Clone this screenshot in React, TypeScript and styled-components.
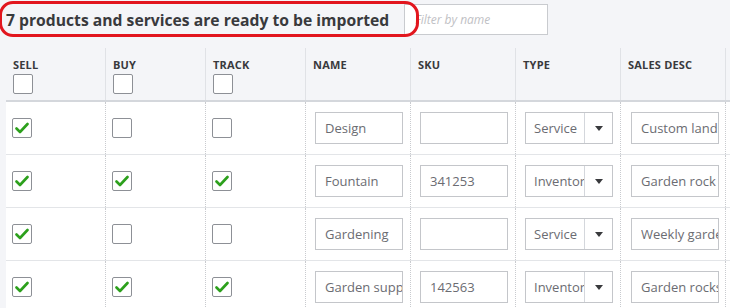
import React from "react";
import styled, { createGlobalStyle } from "styled-components";

const Global = createGlobalStyle`
  html, body { margin: 0; padding: 0; background: #f4f5f8; }
  body { font-family: "Open Sans", "Liberation Sans", sans-serif; color: #393a3d; }
  * { box-sizing: border-box; }
`;

const Page = styled.div`
  width: 730px;
  height: 308px;
  overflow: hidden;
  background: #f4f5f8;
  padding-left: 6px;
`;

const TopBar = styled.div`
  position: relative;
  height: 48px;
  display: flex;
  align-items: flex-start;
  padding-top: 4px;
`;

const Title = styled.h1`
  margin: 0;
  width: 398px;
  height: 31px;
  display: flex;
  align-items: center;
  font-size: 15.7px;
  font-weight: 700;
  color: #393a3d;
  white-space: nowrap;
`;

const Highlight = styled.div`
  position: absolute;
  left: -7px;
  top: 1px;
  width: 420px;
  height: 36px;
  border: 3px solid #e2161e;
  border-radius: 14px;
  pointer-events: none;
`;

const Filter = styled.input`
  width: 144px;
  height: 31px;
  border: 1px solid #c9cbcf;
  background: #fff;
  padding: 0 10px;
  font-family: "Open Sans", "Liberation Sans", sans-serif;
  font-size: 12px;
  outline: none;
  &::placeholder { color: #bfc1c5; font-style: italic; }
`;

const cols = "100px 100px 100px 105px 105px 105px 105px";

const HeadRow = styled.div`
  display: grid;
  grid-template-columns: ${cols};
  height: 54px;
  border-bottom: 2px solid #d4d7dc;
`;

const HeadCell = styled.div`
  padding: 10px 0 0 7px;
  border-right: 1px solid #e0e2e6;
  display: flex;
  flex-direction: column;
  gap: 2px;
  font-size: 11px;
  font-weight: 700;
  line-height: 14px;
  letter-spacing: 0.2px;
  color: #393a3d;
  text-transform: uppercase;
`;

const Row = styled.div`
  display: grid;
  grid-template-columns: ${cols};
  height: 53px;
  background: #fff;
  border-bottom: 1px solid #e3e5e8;
`;

const Cell = styled.div<{ $pad?: number }>`
  display: flex;
  align-items: center;
  padding-left: ${(p) => p.$pad ?? 6}px;
  border-right: 1px dotted #c9cbcf;
`;

const Box = styled.span`
  width: 20px;
  height: 20px;
  border: 1px solid #8d9096;
  border-radius: 2px;
  background: #fff;
  display: inline-flex;
  align-items: center;
  justify-content: center;
`;

const Field = styled.input`
  width: 88px;
  height: 32px;
  border: 1px solid #c4c6ca;
  border-radius: 0;
  background: #fff;
  padding: 0 0 0 9px;
  font-family: "Open Sans", "Liberation Sans", sans-serif;
  font-size: 13px;
  color: #6b6c72;
  outline: none;
`;

const Select = styled.div`
  width: 88px;
  height: 32px;
  border: 1px solid #c4c6ca;
  background: #fff;
  display: flex;
`;

const SelectText = styled.input`
  width: 59px;
  height: 100%;
  border: none;
  border-right: 1px solid #d4d7dc;
  padding: 0 0 0 8px;
  font-family: "Open Sans", "Liberation Sans", sans-serif;
  font-size: 13px;
  color: #6b6c72;
  outline: none;
  background: transparent;
`;

const SelectArrow = styled.div`
  flex: 1;
  display: flex;
  align-items: center;
  justify-content: center;
`;

const Check = ({ on }: { on?: boolean }) => (
  <Box>
    {on && (
      <svg width="14" height="12" viewBox="0 0 14 12">
        <path d="M1.5 6.5 L5 10 L12.5 2" fill="none" stroke="#2ca01c" strokeWidth="2.6" strokeLinecap="round" strokeLinejoin="round" />
      </svg>
    )}
  </Box>
);

const rows = [
  { sell: true, buy: false, track: false, name: "Design", sku: "", type: "Service", desc: "Custom landscape" },
  { sell: true, buy: true, track: true, name: "Fountain", sku: "341253", type: "Inventory", desc: "Garden rock fountain" },
  { sell: true, buy: false, track: false, name: "Gardening", sku: "", type: "Service", desc: "Weekly gardening" },
  { sell: true, buy: true, track: true, name: "Garden supplies", sku: "142563", type: "Inventory", desc: "Garden rocks" },
];

export default function App() {
  return (
    <Page>
      <Global />
      <TopBar>
        <Title>7 products and services are ready to be imported</Title>
        <Filter placeholder="Filter by name" />
        <Highlight />
      </TopBar>
      <HeadRow>
        <HeadCell>SELL<Check /></HeadCell>
        <HeadCell>BUY<Check /></HeadCell>
        <HeadCell>TRACK<Check /></HeadCell>
        <HeadCell>NAME</HeadCell>
        <HeadCell>SKU</HeadCell>
        <HeadCell>TYPE</HeadCell>
        <HeadCell>SALES DESC</HeadCell>
      </HeadRow>
      {rows.map((r, i) => (
        <Row key={i}>
          <Cell><Check on={r.sell} /></Cell>
          <Cell><Check on={r.buy} /></Cell>
          <Cell><Check on={r.track} /></Cell>
          <Cell $pad={9}><Field readOnly value={r.name} /></Cell>
          <Cell $pad={9}><Field readOnly value={r.sku} /></Cell>
          <Cell $pad={9}>
            <Select>
              <SelectText readOnly value={r.type} />
              <SelectArrow>
                <svg width="8" height="5" viewBox="0 0 8 5"><path d="M0 0 H8 L4 5 Z" fill="#393a3d" /></svg>
              </SelectArrow>
            </Select>
          </Cell>
          <Cell $pad={10}><Field readOnly value={r.desc} /></Cell>
        </Row>
      ))}
    </Page>
  );
}
